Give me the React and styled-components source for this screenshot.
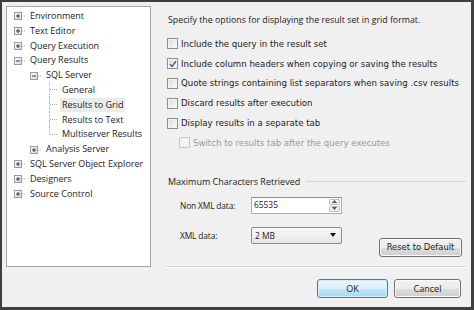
import styled, { createGlobalStyle } from "styled-components";

const ui = `"Open Sans", "Noto Sans", sans-serif`;
const classic = `"DejaVu Sans", "Liberation Sans", sans-serif`;

const GlobalStyle = createGlobalStyle`
  html, body {
    margin: 0;
    padding: 0;
    background: #3f3f3f;
  }
`;

const Frame = styled.div`
  width: 474px;
  height: 310px;
  box-sizing: border-box;
  padding: 2px 3px 3px 2px;
  background: #3f3f3f;
`;

const Dialog = styled.div`
  height: 100%;
  box-sizing: border-box;
  display: flex;
  align-items: flex-start;
  padding: 4px 5px 0 4px;
  background: #f0f0f0;
  font-family: ${ui};
  font-size: 9px;
  color: #1b1b1b;
`;

const TreeBox = styled.ul`
  width: 145px;
  height: 261px;
  flex-shrink: 0;
  box-sizing: border-box;
  margin: 0;
  padding: 1.6px 0 0;
  list-style: none;
  background: #fff;
  border: 1px solid #a3a3a3;
`;

const TreeRow = styled.li`
  height: 14.8px;
  display: flex;
  align-items: center;
  padding-left: ${(p) => 7 + p.$level * 16}px;
  white-space: nowrap;
`;

const TreeLabel = styled.span`
  padding: 0 2px;
  margin-right: -2px;
  line-height: 14px;
  background: ${(p) => (p.$selected ? "#ebebeb" : "transparent")};
`;

const Pane = styled.div`
  flex: 1;
  align-self: stretch;
  display: flex;
  flex-direction: column;
  margin-left: 15px;
`;

const Description = styled.p`
  margin: 7px 0 0 2px;
  line-height: 14px;
  font-size: 8.8px;
`;

const Options = styled.div`
  margin-top: 7px;
  display: flex;
  flex-direction: column;
`;

const OptionRow = styled.label`
  height: 19.8px;
  display: flex;
  align-items: center;
  gap: 3px;
  padding-left: ${(p) => (p.$indent ? 13 : 1)}px;
  font-family: ${classic};
  font-size: 8.6px;
  color: ${(p) => (p.$disabled ? "#9b9b9b" : "#1b1b1b")};
  white-space: nowrap;
`;

const Box = styled.span`
  width: 11px;
  height: 11px;
  box-sizing: border-box;
  flex-shrink: 0;
  display: flex;
  align-items: center;
  justify-content: center;
  border: 1px solid ${(p) => (p.$disabled ? "#c8c8c8" : "#8e8f8f")};
  background: ${(p) =>
    p.$disabled
      ? "#f4f4f4"
      : "linear-gradient(135deg, #d9d9d9 0%, #ededed 55%, #fbfbfb 100%)"};
  box-shadow: inset 0 0 0 1px ${(p) => (p.$disabled ? "#f0f0f0" : "#f4f4f4")};
`;

const GroupHeader = styled.div`
  margin-top: 22px;
  display: flex;
  align-items: center;
  gap: 6px;
  padding-left: 2px;
  line-height: 14px;
`;

const Rule = styled.span`
  flex: 1;
  height: 1px;
  background: #d5d5d5;
`;

const FormGrid = styled.div`
  margin: 8px 0 0 14px;
  display: grid;
  grid-template-columns: 71px 91px 1fr;
  grid-template-rows: 17px 13px 17px 13px;
  font-size: 8.4px;
`;

const FieldLabel = styled.span`
  grid-column: 1;
  grid-row: ${(p) => p.$row};
  display: flex;
  align-items: center;
  font-size: 8.4px;
  letter-spacing: -0.15px;
`;

const NumberBox = styled.div`
  grid-column: 2;
  grid-row: 1;
  box-sizing: border-box;
  display: flex;
  justify-content: space-between;
  padding: 1px 1px 1px 2px;
  background: #fff;
  border: 1px solid #abadb3;
  border-top-color: #8f9094;
  line-height: 11px;
`;

const Spinner = styled.div`
  width: 11px;
  display: flex;
  flex-direction: column;
  gap: 1px;
`;

const SpinButton = styled.span`
  flex: 1;
  display: flex;
  align-items: center;
  justify-content: center;
  border: 1px solid #c3c3c3;
  border-radius: 1px;
  background: linear-gradient(#f7f7f7, #e6e6e6);
`;

const Select = styled.div`
  grid-column: 2;
  grid-row: 3;
  box-sizing: border-box;
  display: flex;
  align-items: center;
  justify-content: space-between;
  padding: 0 5px 0 3px;
  border: 1px solid #8b8b8b;
  border-radius: 2px;
  background: linear-gradient(#fafafa, #f0f0f0 50%, #e4e4e4);
`;

const Button = styled.div`
  box-sizing: border-box;
  display: flex;
  align-items: center;
  justify-content: center;
  width: ${(p) => p.$w}px;
  height: 19px;
  border: 1px solid ${(p) => (p.$default ? "#3c7fb1" : "#707070")};
  border-radius: 3px;
  background: ${(p) =>
    p.$default
      ? "linear-gradient(#eaf6fd 0%, #d9f0fc 50%, #bee6fd 51%, #a7d9f5 100%)"
      : "linear-gradient(#f2f2f2 0%, #ebebeb 50%, #dddddd 51%, #cfcfcf 100%)"};
  box-shadow: inset 0 0 0 1px ${(p) => (p.$default ? "#d5ecf9" : "#fbfbfb")};
  font-family: ${(p) => (p.$classic ? classic : ui)};
  font-size: ${(p) => (p.$classic ? 8.4 : 9)}px;
  color: #1b1b1b;
`;

const ResetButton = styled(Button)`
  grid-column: 3;
  grid-row: 3 / 5;
  justify-self: end;
  align-self: end;
  margin-right: 4px;
`;

const Separator = styled.div`
  margin-top: 9px;
  height: 1px;
  background: #d3d3d3;
  border-bottom: 1px solid #fff;
`;

const ButtonBar = styled.div`
  margin-top: 11px;
  padding-right: 5px;
  display: flex;
  justify-content: flex-end;
  gap: 6px;
`;

function Expander({ open }) {
  return (
    <svg width="13" height="9" viewBox="0 0 13 9" style={{ flexShrink: 0, marginRight: 1 }}>
      <defs>
        <linearGradient id="exg" x1="0" y1="0" x2="1" y2="1">
          <stop offset="0" stopColor="#ffffff" />
          <stop offset="1" stopColor="#d8d8d8" />
        </linearGradient>
      </defs>
      <rect x="0.5" y="1.5" width="7" height="7" fill="url(#exg)" stroke="#9a9a9a" />
      <line x1="2" y1="5" x2="6" y2="5" stroke="#3a3a3a" />
      {!open && <line x1="4" y1="3" x2="4" y2="7" stroke="#3a3a3a" />}
      <line x1="8" y1="5" x2="12" y2="5" stroke="#a9a9a9" strokeDasharray="1 1" />
    </svg>
  );
}

function Branch({ last }) {
  return (
    <svg width="13" height="15" viewBox="0 0 13 15" style={{ flexShrink: 0, marginRight: 1 }}>
      <line x1="3.5" y1="0" x2="3.5" y2={last ? 7.5 : 15} stroke="#a9a9a9" strokeDasharray="1 1" />
      <line x1="4" y1="7.5" x2="11" y2="7.5" stroke="#a9a9a9" strokeDasharray="1 1" />
    </svg>
  );
}

function Check({ checked, disabled }) {
  return (
    <Box $disabled={disabled}>
      {checked && (
        <svg width="8" height="8" viewBox="0 0 8 8">
          <path d="M1 4.2 L3 6.4 L7 1.2" fill="none" stroke="#4b5d8f" strokeWidth="1.5" />
        </svg>
      )}
    </Box>
  );
}

const tree = [
  { level: 0, label: "Environment", kind: "closed" },
  { level: 0, label: "Text Editor", kind: "closed" },
  { level: 0, label: "Query Execution", kind: "closed" },
  { level: 0, label: "Query Results", kind: "open" },
  { level: 1, label: "SQL Server", kind: "open" },
  { level: 2, label: "General", kind: "leaf" },
  { level: 2, label: "Results to Grid", kind: "leaf", selected: true },
  { level: 2, label: "Results to Text", kind: "leaf" },
  { level: 2, label: "Multiserver Results", kind: "leaf", last: true },
  { level: 1, label: "Analysis Server", kind: "closed" },
  { level: 0, label: "SQL Server Object Explorer", kind: "closed" },
  { level: 0, label: "Designers", kind: "closed" },
  { level: 0, label: "Source Control", kind: "closed" },
];

const options = [
  { label: "Include the query in the result set" },
  { label: "Include column headers when copying or saving the results", checked: true },
  { label: "Quote strings containing list separators when saving .csv results" },
  { label: "Discard results after execution" },
  { label: "Display results in a separate tab" },
  { label: "Switch to results tab after the query executes", indent: true, disabled: true },
];

export default function App() {
  return (
    <>
      <GlobalStyle />
      <Frame>
        <Dialog>
          <TreeBox>
            {tree.map((item) => (
              <TreeRow key={item.label} $level={item.level}>
                {item.kind === "leaf" ? (
                  <Branch last={item.last} />
                ) : (
                  <Expander open={item.kind === "open"} />
                )}
                <TreeLabel $selected={item.selected}>{item.label}</TreeLabel>
              </TreeRow>
            ))}
          </TreeBox>

          <Pane>
            <Description>
              Specify the options for displaying the result set in grid format.
            </Description>

            <Options>
              {options.map((o) => (
                <OptionRow key={o.label} $indent={o.indent} $disabled={o.disabled}>
                  <Check checked={o.checked} disabled={o.disabled} />
                  {o.label}
                </OptionRow>
              ))}
            </Options>

            <GroupHeader>
              Maximum Characters Retrieved
              <Rule />
            </GroupHeader>

            <FormGrid>
              <FieldLabel $row={1}>Non XML data:</FieldLabel>
              <NumberBox>
                65535
                <Spinner>
                  <SpinButton>
                    <svg width="5" height="3" viewBox="0 0 5 3">
                      <path d="M0 3 L2.5 0 L5 3 Z" fill="#555" />
                    </svg>
                  </SpinButton>
                  <SpinButton>
                    <svg width="5" height="3" viewBox="0 0 5 3">
                      <path d="M0 0 L2.5 3 L5 0 Z" fill="#555" />
                    </svg>
                  </SpinButton>
                </Spinner>
              </NumberBox>

              <FieldLabel $row={3}>XML data:</FieldLabel>
              <Select>
                2 MB
                <svg width="6" height="4" viewBox="0 0 6 4">
                  <path d="M0 0 L6 0 L3 4 Z" fill="#111" />
                </svg>
              </Select>

              <ResetButton $w={83} $classic>
                Reset to Default
              </ResetButton>
            </FormGrid>

            <Separator />

            <ButtonBar>
              <Button $w={71} $default>
                OK
              </Button>
              <Button $w={67}>Cancel</Button>
            </ButtonBar>
          </Pane>
        </Dialog>
      </Frame>
    </>
  );
}
